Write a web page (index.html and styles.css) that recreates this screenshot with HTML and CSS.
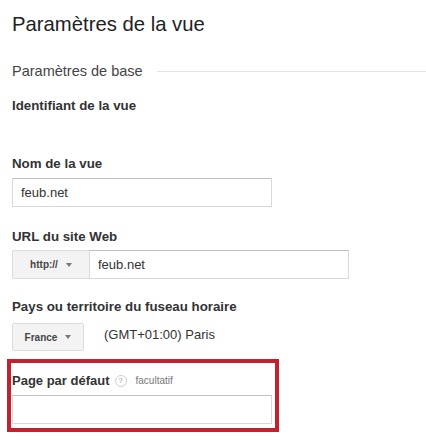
FILE: index.html
```html
<!DOCTYPE html>
<html lang="fr">
<head>
<meta charset="utf-8">
<title>Paramètres de la vue</title>
<link rel="stylesheet" href="styles.css">
</head>
<body>
<div class="page">
  <h1 class="title">Paramètres de la vue</h1>

  <div class="section">
    <span class="section-label">Paramètres de base</span>
    <span class="section-rule"></span>
  </div>

  <div class="field field-id">
    <div class="label">Identifiant de la vue</div>
  </div>

  <div class="field field-name">
    <div class="label">Nom de la vue</div>
    <div class="input">feub.net</div>
  </div>

  <div class="field field-url">
    <div class="label">URL du site Web</div>
    <div class="group">
      <div class="btn btn-proto">http:// <span class="caret"></span></div>
      <div class="input input-joined">feub.net</div>
    </div>
  </div>

  <div class="field field-tz">
    <div class="label">Pays ou territoire du fuseau horaire</div>
    <div class="tz-row">
      <div class="btn btn-country">France <span class="caret"></span></div>
      <span class="tz-value">(GMT+01:00) Paris</span>
    </div>
  </div>

  <div class="highlight">
    <div class="label label-inline">Page par défaut <span class="help">?</span> <span class="optional">facultatif</span></div>
    <div class="input"></div>
  </div>
</div>
</body>
</html>
```

FILE: styles.css
```css
html, body {
  margin: 0;
  padding: 0;
  background: #ffffff;
}

body {
  font-family: "Liberation Sans", Arial, sans-serif;
  color: #333333;
}

.page {
  padding: 12px 0 0 12px;
}

.title {
  margin: 0;
  font-size: 20.3px;
  line-height: 24px;
  font-weight: normal;
  color: #222222;
}

.section {
  display: flex;
  align-items: center;
  margin-top: 27px;
  height: 16px;
}

.section-label {
  font-size: 14.5px;
  line-height: 16px;
  color: #444444;
  padding-right: 14px;
}

.section-rule {
  flex: 1;
  height: 1px;
  background: #e3e3e3;
}

.label {
  font-size: 13.3px;
  line-height: 16px;
  font-weight: bold;
  color: #333333;
}

.field-id {
  margin-top: 19px;
}

.field-name {
  margin-top: 42px;
}

.field-url {
  margin-top: 22px;
}

.field-tz {
  margin-top: 20px;
}

.input {
  box-sizing: border-box;
  width: 260px;
  height: 29px;
  margin-top: 6px;
  border: 1px solid #d9d9d9;
  border-top-color: #c0c0c0;
  padding: 0 8px;
  font-size: 13px;
  line-height: 27px;
  font-weight: normal;
  color: #333333;
  background: #ffffff;
}

.group {
  display: flex;
  margin-top: 5px;
}

.group .input {
  margin-top: 0;
}

.btn {
  box-sizing: border-box;
  display: flex;
  align-items: center;
  justify-content: center;
  gap: 8px;
  background: #f3f3f3;
  border: 1px solid #dcdcdc;
  border-radius: 2px;
  font-size: 10px;
  font-weight: bold;
  color: #444444;
}

.btn-proto {
  width: 77px;
  height: 29px;
  border-radius: 2px 0 0 2px;
  border-right: none;
}

.input-joined {
  border-radius: 0;
}

.caret {
  display: inline-block;
  width: 0;
  height: 0;
  border-left: 3.5px solid transparent;
  border-right: 3.5px solid transparent;
  border-top: 4px solid #777777;
}

.tz-row {
  display: flex;
  align-items: center;
  margin-top: 8px;
  gap: 20px;
}

.btn-country {
  width: 72px;
  height: 28px;
}

.tz-value {
  font-size: 13px;
  color: #333333;
  margin-top: -5px;
}

.highlight {
  box-sizing: border-box;
  width: 272px;
  margin: 8px 0 0 -5px;
  border: 4px solid #c1222e;
  padding: 10px 0 4px 1px;
}

.highlight .input {
  width: 260px;
  margin-left: 0;
}

.label-inline {
  display: flex;
  align-items: center;
  font-size: 13px;
}

.help {
  display: inline-flex;
  align-items: center;
  justify-content: center;
  box-sizing: border-box;
  width: 12px;
  height: 12px;
  margin-left: 5px;
  border: 1px solid #cfcfcf;
  border-radius: 50%;
  font-size: 8px;
  font-weight: normal;
  color: #9a9a9a;
}

.optional {
  margin-left: 9px;
  font-size: 10px;
  font-weight: normal;
  color: #777777;
}
```
